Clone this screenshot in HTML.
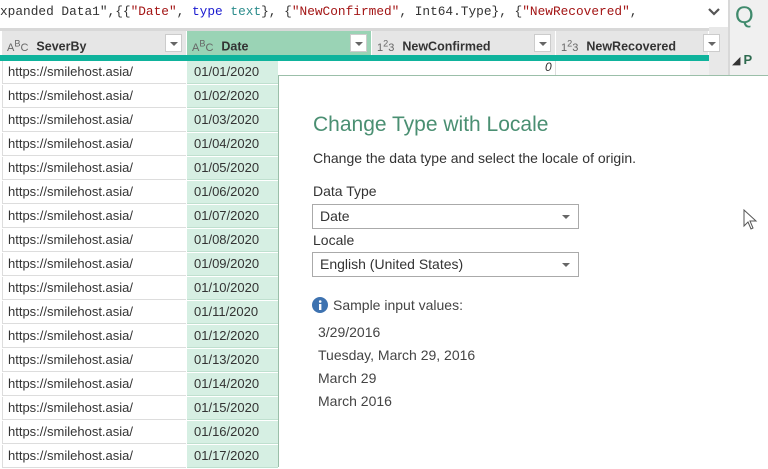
<!DOCTYPE html>
<html><head><style>
*{margin:0;padding:0;box-sizing:border-box}
body{width:768px;height:467px;overflow:hidden;background:#fff;font-family:"Liberation Sans",sans-serif;position:relative}
.fb{position:absolute;left:0;top:0;width:700px;height:27px;background:#fff;font-family:"Liberation Mono",monospace;font-size:12.8px;line-height:24px;color:#333;white-space:nowrap;overflow:hidden}
.s{color:#a31515}.k{color:#1a1ad0}.t{color:#2b8c8c}
.rp{position:absolute;left:728px;top:0;width:40px;height:467px;background:#f0f0f0;border-left:2px solid #d8d8d8}
.gap{position:absolute;left:709px;top:27px;width:19px;height:48px;background:#e8e8e8}
.hdr{position:absolute;top:31px;height:24px;background:#e6e6e6;border-right:1px solid #fff;font-size:12.5px;font-weight:bold;color:#333;line-height:24px}
.hdr .ic{font-weight:normal;color:#666;font-size:11px;margin:0 8px 0 5px}
.dd{position:absolute;right:4px;top:3px;width:17px;height:18px;background:#fff;border:1px solid #ccc}
.dd:after{content:"";position:absolute;left:4px;top:7px;border:4px solid transparent;border-top:4px solid #666}
.teal{position:absolute;left:0;top:55px;width:709px;height:6px;background:#0fb39c}
.row{position:absolute;left:0;height:24px;width:278px}
.c1{position:absolute;left:2px;width:184px;height:23px;border-bottom:1px solid #ddd;border-left:1px solid #ddd;font-size:13px;color:#333;line-height:22px;padding-left:5px}
.c2{position:absolute;left:187px;width:91px;height:23px;background:#d6efe3;border-bottom:1px solid #bfe0cf;font-size:13px;color:#333;line-height:22px;padding-left:7px}
.dlg{position:absolute;left:278px;top:75px;width:490px;height:392px;background:#fff;border-top:1px solid #9bbfa9;border-left:1px solid #9bbfa9}
.title{position:absolute;left:34px;top:37px;font-size:21px;color:#4a8f72}
.sub{position:absolute;left:34px;top:74px;font-size:14px;color:#333}
.lbl{position:absolute;left:34px;font-size:14px;color:#333}
.sel{position:absolute;left:33px;width:267px;height:25px;border:1px solid #aaa;font-size:14px;color:#333;line-height:23px;padding-left:7px}
.sel:after{content:"";position:absolute;right:8px;top:10px;border:4px solid transparent;border-top:4px solid #666}
.smp{position:absolute;left:39px;font-size:14px;color:#444}
</style></head><body>
<div class="fb">xpanded Data1",{{<span class="s">"Date"</span>, <span class="k">type</span> <span class="t">text</span>}, {<span class="s">"NewConfirmed"</span>, Int64.Type}, {<span class="s">"NewRecovered"</span>,</div>
<div style="position:absolute;left:700px;top:0;width:28px;height:27px;background:#fff"></div>
<div class="gap"></div>
<svg style="position:absolute;left:704px;top:0" width="20" height="26"><path d="M5 9 L10 14 L15 9" stroke="#555" stroke-width="2.2" fill="none"/></svg>
<div class="rp"><div style="position:absolute;left:5px;top:2px;font-size:24px;color:#3f8a6c">Q</div><div style="position:absolute;left:2px;top:52px;font-size:11px;color:#333">◢ <b style="color:#2e6b50;font-size:13px">P</b></div></div>
<div style="position:absolute;left:0;top:28px;width:709px;height:3px;background:#d8d8d8"></div>
<div class="hdr" style="left:2px;width:185px"><span class="ic">A<sup>B</sup>C</span>SeverBy<div class="dd"></div></div>
<div class="hdr" style="left:187px;width:185px;background:#9ad3b5"><span class="ic">A<sup>B</sup>C</span>Date<div class="dd"></div></div>
<div class="hdr" style="left:372px;width:184px"><span class="ic">1<sup>2</sup>3</span>NewConfirmed<div class="dd"></div></div>
<div class="hdr" style="left:556px;width:153px"><span class="ic">1<sup>2</sup>3</span>NewRecovered<div class="dd" style="right:-12px"></div></div>
<div class="teal"></div>
<div style="position:absolute;left:372px;top:61px;width:337px;height:14px;background:#fff"></div>
<div style="position:absolute;left:555px;top:61px;width:1px;height:14px;background:#ddd"></div>
<div style="position:absolute;left:690px;top:61px;width:19px;height:14px;background:#f0f0f0"></div>
<div style="position:absolute;left:545px;top:60px;font-size:12px;font-style:italic;color:#333">0</div>
<div id="rows"></div>
<script>
var h='';for(var i=1;i<=17;i++){var t=61+(i-1)*24;var d=(i<10?'0'+i:i);h+='<div class="row" style="top:'+t+'px"><div class="c1">https://smilehost.asia/</div><div class="c2">01/'+d+'/2020</div></div>';}
document.getElementById('rows').innerHTML=h;
</script>
<div class="dlg">
<div class="title">Change Type with Locale</div>
<div class="sub">Change the data type and select the locale of origin.</div>
<div class="lbl" style="top:107px">Data Type</div>
<div class="sel" style="top:128px">Date</div>
<div class="lbl" style="top:156px">Locale</div>
<div class="sel" style="top:176px">English (United States)</div>
<svg style="position:absolute;left:33px;top:221px" width="16" height="16"><circle cx="8" cy="8" r="8" fill="#3d72b0"/><rect x="7" y="7" width="2.4" height="6" fill="#fff"/><circle cx="8.2" cy="4.5" r="1.3" fill="#fff"/></svg>
<div class="smp" style="top:221px;left:54px">Sample input values:</div>
<div class="smp" style="top:248px">3/29/2016</div>
<div class="smp" style="top:271px">Tuesday, March 29, 2016</div>
<div class="smp" style="top:294px">March 29</div>
<div class="smp" style="top:317px">March 2016</div>
<svg style="position:absolute;left:464px;top:133px" width="16" height="24"><path d="M1 1 L1 17 L5 13 L8 20 L10 19 L7 12 L13 12 Z" fill="#fff" stroke="#555" stroke-width="1"/></svg>
</div>
</body></html>
